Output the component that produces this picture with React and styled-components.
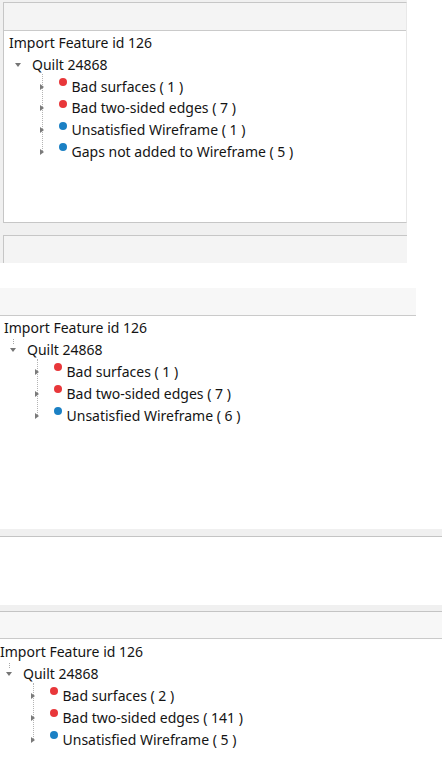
import React from 'react';
import styled, { createGlobalStyle } from 'styled-components';

const Global = createGlobalStyle`
  html, body { margin: 0; padding: 0; background: #ffffff; }
  body {
    font-family: "Noto Sans", "Segoe UI", sans-serif;
    font-size: 14px;
    color: #141414;
  }
`;

const Page = styled.div`
  width: 442px;
  height: 783px;
  overflow: hidden;
  display: flex;
  flex-direction: column;
  background: #ffffff;
`;

/* ---------- shot 1 ---------- */
const Shot1 = styled.div`
  width: 407px;
  height: 263px;
  flex: none;
  box-sizing: border-box;
  padding: 2px 0 0 3px;
  background: #f0f0f0;
  display: flex;
  flex-direction: column;
  gap: 12px;
`;

const FramedPanel = styled.div`
  width: 404px;
  height: 221px;
  box-sizing: border-box;
  border: 1px solid #c6c6c6;
  border-right: 1px solid #e8e8e8;
  background: #ffffff;
  display: flex;
  flex-direction: column;
`;

const Header = styled.div`
  flex: none;
  height: ${p => p.$h}px;
  width: ${p => p.$w || 'auto'};
  background: ${p => p.$bg || '#f5f5f5'};
  border-bottom: 1px solid #cacaca;
`;

const LowerBox = styled.div`
  width: 404px;
  height: 28px;
  box-sizing: border-box;
  border-top: 1px solid #c6c6c6;
  border-left: 1px solid #c6c6c6;
  background: #f4f4f4;
`;

/* ---------- shot 2 / 3 ---------- */
const Shot = styled.div`
  flex: none;
  display: flex;
  flex-direction: column;
  background: #ffffff;
`;

const Spacer = styled.div`
  flex: none;
  height: ${p => p.$h}px;
  background: ${p => p.$bg || '#ffffff'};
`;

const Rule = styled.div`
  flex: none;
  height: 1px;
  background: #c4c4c4;
`;

const Content = styled.div`
  flex: none;
  height: ${p => p.$h}px;
  background: #ffffff;
`;

/* ---------- tree ---------- */
const Tree = styled.div`
  padding: ${p => p.$top}px 0 0 ${p => p.$left}px;
  --row-h: ${p => p.$rh}px;
`;

const Row = styled.div`
  height: var(--row-h);
  display: flex;
  align-items: center;
  white-space: nowrap;
  position: relative;
`;

const QuiltRow = styled(Row)`
  &::before {
    content: '';
    display: ${p => (p.$stub ? 'block' : 'none')};
    position: absolute;
    left: 9px;
    top: 1px;
    height: 5px;
    border-left: 1px dotted #a8a8a8;
  }
`;

const DownArrow = styled.span`
  width: 0;
  height: 0;
  margin: 1px 11px 0 6px;
  border-left: 3.5px solid transparent;
  border-right: 3.5px solid transparent;
  border-top: 4px solid #757575;
`;

const RightArrow = styled.span`
  position: relative;
  z-index: 1;
  width: 0;
  height: 0;
  margin: 1px 0 0 31px;
  border-top: 3.5px solid transparent;
  border-bottom: 3.5px solid transparent;
  border-left: 4.5px solid #7a7a7a;
`;

const ChildGroup = styled.div`
  position: relative;
  &::before {
    content: '';
    position: absolute;
    left: 33px;
    top: -1px;
    bottom: 9px;
    border-left: 1px dotted #b4b4b4;
  }
`;

const Dot = styled.span`
  flex: none;
  width: 8px;
  height: 8px;
  border-radius: 50%;
  align-self: flex-start;
  margin: 3px 5px 0 14.5px;
  background: ${p => (p.$tone === 'red' ? '#e8373a' : '#1b80c4')};
`;

const Label = styled.span`
  position: relative;
  z-index: 1;
`;

function IssueTree({ left, top, rowH = 22, stub, items }) {
  return (
    <Tree $left={left} $top={top} $rh={rowH}>
      <Row>
        <Label>Import Feature id 126</Label>
      </Row>
      <QuiltRow $stub={stub}>
        <DownArrow />
        <Label>Quilt 24868</Label>
      </QuiltRow>
      <ChildGroup>
        {items.map(it => (
          <Row key={it.label}>
            <RightArrow />
            <Dot $tone={it.tone} />
            <Label>{it.label}</Label>
          </Row>
        ))}
      </ChildGroup>
    </Tree>
  );
}

const tree1 = [
  { tone: 'red', label: 'Bad surfaces ( 1 )' },
  { tone: 'red', label: 'Bad two-sided edges ( 7 )' },
  { tone: 'blue', label: 'Unsatisfied Wireframe ( 1 )' },
  { tone: 'blue', label: 'Gaps not added to Wireframe ( 5 )' },
];

const tree2 = [
  { tone: 'red', label: 'Bad surfaces ( 1 )' },
  { tone: 'red', label: 'Bad two-sided edges ( 7 )' },
  { tone: 'blue', label: 'Unsatisfied Wireframe ( 6 )' },
];

const tree3 = [
  { tone: 'red', label: 'Bad surfaces ( 2 )' },
  { tone: 'red', label: 'Bad two-sided edges ( 141 )' },
  { tone: 'blue', label: 'Unsatisfied Wireframe ( 5 )' },
];

export default function App() {
  return (
    <>
      <Global />
      <Page>
        <Shot1>
          <FramedPanel>
            <Header $h={27} $bg="#f4f4f4" />
            <IssueTree left={5} top={1} rowH={21.7} items={tree1} />
          </FramedPanel>
          <LowerBox />
        </Shot1>

        <Shot>
          <Spacer $h={25} />
          <Header $h={27} $w="416px" $bg="#f7f7f7" />
          <Content $h={213}>
            <IssueTree left={4} top={0} stub items={tree2} />
          </Content>
          <Spacer $h={7} $bg="#f0f0f0" />
          <Rule />
        </Shot>

        <Shot>
          <Spacer $h={68} />
          <Spacer $h={6} $bg="#f0f0f0" />
          <Rule />
          <Header $h={26} $bg="#f7f7f7" />
          <Content $h={150}>
            <IssueTree left={0} top={1} stub items={tree3} />
          </Content>
        </Shot>
      </Page>
    </>
  );
}
